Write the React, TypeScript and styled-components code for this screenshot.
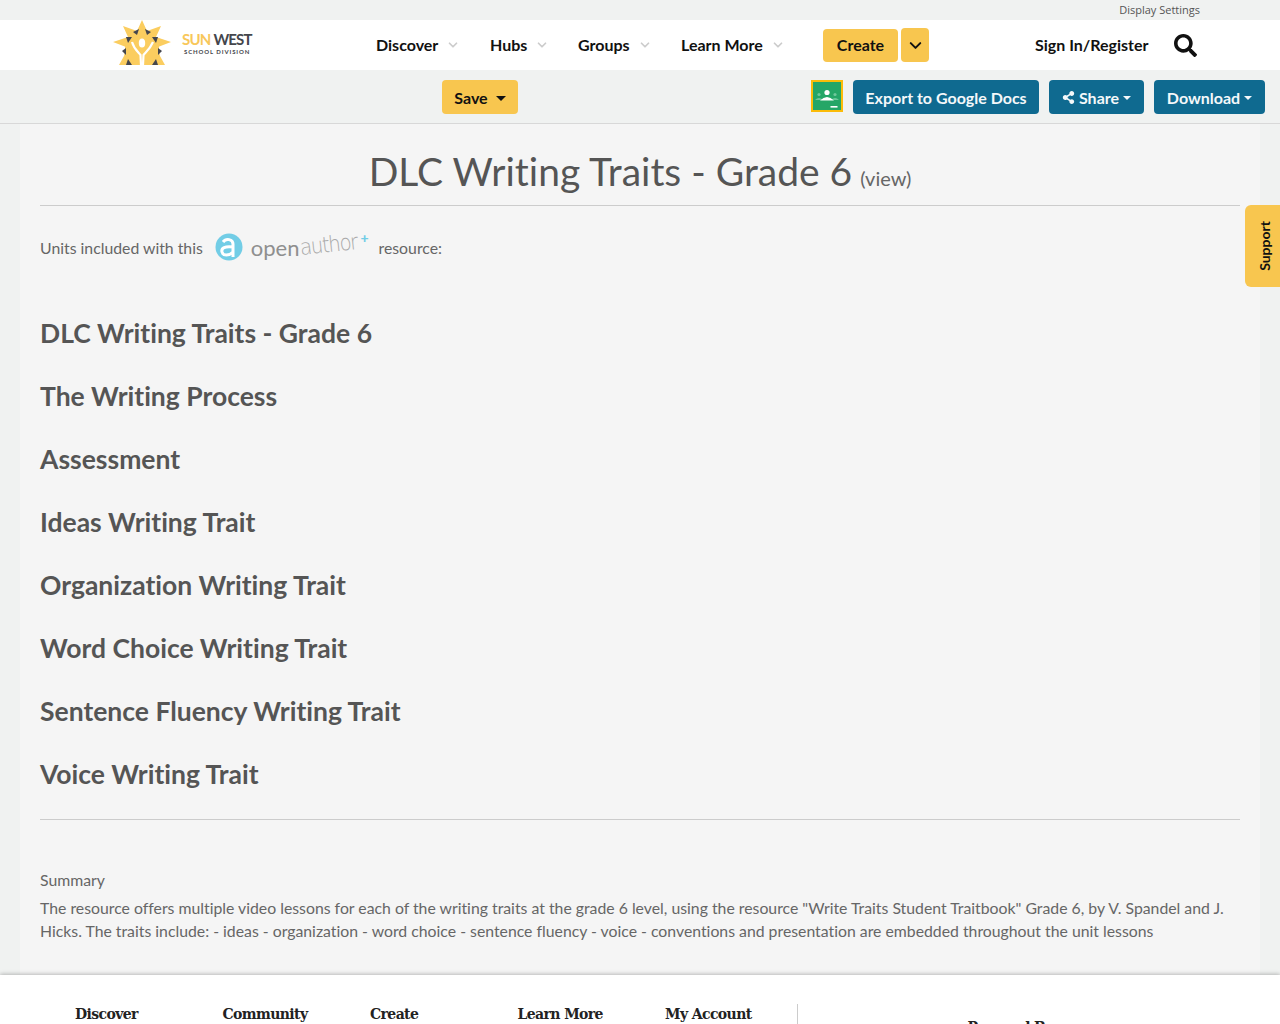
import React from "react";
import styled, { createGlobalStyle } from "styled-components";
import { FaSearch, FaShareAlt } from "react-icons/fa";
import { FiChevronDown } from "react-icons/fi";

const Global = createGlobalStyle`
  html, body { margin: 0; padding: 0; height: 1024px; overflow: hidden; background: #f0f2f1; }
  body { font-family: Lato, "Liberation Sans", sans-serif; color: #555; font-variant-ligatures: none; }
  * { box-sizing: border-box; }
  button { font-variant-ligatures: none; }
`;

const Page = styled.div`
  position: relative;
  width: 1280px;
  height: 1024px;
  overflow: hidden;
`;

const TopBar = styled.div`
  height: 20px;
  display: flex;
  justify-content: flex-end;
  align-items: center;
  padding: 0 80px 1px 0;
  font: 400 11px "Open Sans", sans-serif;
  color: #555;
`;

const Nav = styled.nav`
  height: 50px;
  background: #fff;
  display: flex;
  align-items: center;
  padding-left: 112px;
`;

const Brand = styled.div`
  display: flex;
  width: 264px;
  height: 50px;
  align-items: flex-start;
`;

const BrandText = styled.div`
  margin-left: 10px;
  padding-top: 10px;
  display: flex;
  flex-direction: column;
`;

const BrandName = styled.div`
  font-size: 15px;
  font-weight: 700;
  letter-spacing: -0.85px;
  line-height: 18px;
  color: #44464c;
  white-space: nowrap;
`;

const BrandSun = styled.span`
  color: #f8c75a;
  font-weight: 700;
  margin-right: 3px;
`;

const BrandSub = styled.div`
  font-size: 6px;
  font-weight: 700;
  letter-spacing: 0.9px;
  line-height: 8px;
  margin-left: 2px;
  color: #44464c;
  white-space: nowrap;
`;

const NavItem = styled.a<{ $w: number }>`
  width: ${(p) => p.$w}px;
  display: flex;
  align-items: center;
  font-size: 16px;
  font-weight: 700;
  color: #111;
  white-space: nowrap;
  padding-bottom: 2px;
  svg { margin-left: 8px; color: #ccc; position: relative; top: 1px; }
`;

const CreateButton = styled.button`
  height: 33px;
  width: 75px;
  margin-left: 2px;
  border: 0;
  border-radius: 4px;
  background: #f8c64f;
  font: 700 16px Lato, sans-serif;
  color: #111;
  padding: 0 0 2px;
`;

const CreateCaret = styled.button`
  height: 34px;
  width: 28px;
  margin-left: 3px;
  border: 0;
  border-radius: 4px;
  background: #f8c64f;
  color: #111;
  padding: 0;
  display: flex;
  align-items: center;
  justify-content: center;
`;

const SignIn = styled.a`
  margin-left: 106px;
  font-size: 16px;
  font-weight: 700;
  color: #111;
  white-space: nowrap;
  padding-bottom: 2px;
`;

const SearchLink = styled.a`
  margin-left: 25px;
  display: flex;
  color: #111;
`;

const Toolbar = styled.div`
  height: 54px;
  border-bottom: 1px solid #d8d8d8;
  display: flex;
  align-items: flex-start;
  padding: 10px 15px 0 442px;
`;

const SaveButton = styled.button`
  height: 34px;
  width: 76px;
  border: 0;
  border-radius: 4px;
  background: #f8c64f;
  font: 700 16px Lato, sans-serif;
  color: #111;
  padding: 0;
  display: flex;
  align-items: center;
  justify-content: center;
  gap: 8px;
`;

const Caret = styled.span<{ $size?: number }>`
  display: inline-block;
  width: 0;
  height: 0;
  margin-top: 2px;
  border-left: ${(p) => p.$size ?? 4}px solid transparent;
  border-right: ${(p) => p.$size ?? 4}px solid transparent;
  border-top: ${(p) => p.$size ?? 4}px solid currentColor;
`;

const ClassroomBox = styled.div`
  width: 32px;
  height: 32px;
  margin-left: auto;
  margin-right: 10px;
  border: 2px solid #fbbc09;
  background: #25a667;
  display: flex;
`;

const BlueButton = styled.button<{ $w: number }>`
  width: ${(p) => p.$w}px;
  height: 34px;
  margin-right: 10px;
  border: 0;
  border-radius: 4px;
  background: #0f6a90;
  color: #f4f8fa;
  font: 700 16px Lato, sans-serif;
  padding: 0;
  display: flex;
  align-items: center;
  justify-content: center;
  gap: 4px;
  white-space: nowrap;
  &:last-child { margin-right: 0; }
`;

const Main = styled.main`
  width: 1240px;
  height: 851px;
  margin-left: 20px;
  background: #f5f5f5;
  padding: 0 20px;
`;

const Title = styled.h1`
  margin: 0;
  height: 82px;
  border-bottom: 1px solid #ccc;
  text-align: center;
  font-weight: 400;
  font-size: 39px;
  line-height: 48px;
  padding-top: 23px;
  color: #555;
`;

const TitleNote = styled.small`
  font-size: 20px;
  color: #666;
  margin-left: 8px;
`;

const UnitsLine = styled.div`
  display: flex;
  align-items: center;
  height: 44px;
  margin-top: 19px;
  font-size: 15.8px;
  color: #666;
`;

const OALogo = styled.div`
  display: flex;
  align-items: center;
  margin: 0 13px 0 12px;
  position: relative;
`;

const OAText = styled.span`
  font-size: 22px;
  color: #8f8f8f;
  margin-left: 8px;
`;

const OAScript = styled.span`
  display: inline-block;
  font-family: "DejaVu Sans", sans-serif;
  font-weight: 200;
  font-size: 22px;
  color: #a9a9a9;
  transform: rotate(-6deg) scaleX(0.9);
  transform-origin: left center;
  width: 66px;
  letter-spacing: -1.5px;
`;

const OAPlus = styled.span`
  position: absolute;
  right: -3px;
  top: -4px;
  font-size: 14px;
  font-weight: 900;
  color: #72cde6;
`;

const UnitList = styled.div`
  margin-top: 46px;
  border-bottom: 1px solid #ccc;
  height: 505px;
`;

const UnitTitle = styled.h2`
  margin: 0;
  height: 63px;
  font-size: 26.5px;
  line-height: 36px;
  font-weight: 700;
  color: #555;
`;

const SummaryBlock = styled.section`
  margin-top: 48px;
  font-size: 15.8px;
  line-height: 23px;
  color: #666;
`;

const SummaryLabel = styled.div`
  margin-bottom: 5px;
`;

const Footer = styled.footer`
  height: 60px;
  background: #fff;
  box-shadow: 0 -1px 4px rgba(0, 0, 0, 0.25);
  display: flex;
  padding: 29px 0 0 75px;
  position: relative;
`;

const FooterCol = styled.div`
  width: 147.5px;
  font-family: "DejaVu Serif", serif;
  font-weight: 700;
  font-size: 14px;
  letter-spacing: -0.6px;
  line-height: 20px;
  color: #222;
  white-space: nowrap;
`;

const FooterAside = styled.div`
  border-left: 1px solid #ccc;
  margin-left: -16px;
  padding: 15px 0 0 170px;
  font-family: "DejaVu Serif", serif;
  font-weight: 700;
  font-size: 14px;
  letter-spacing: -0.6px;
  color: #222;
  white-space: nowrap;
`;

const Support = styled.a`
  position: absolute;
  right: 0;
  top: 205px;
  width: 35px;
  height: 82px;
  border-radius: 6px 0 0 6px;
  background: #f8c64f;
  display: flex;
  align-items: center;
  justify-content: center;
  font-size: 14px;
  font-weight: 700;
  color: #111;
  padding-left: 3px;
`;

const SupportLabel = styled.span`
  writing-mode: vertical-rl;
  transform: rotate(180deg);
`;

const units = [
  "DLC Writing Traits - Grade 6",
  "The Writing Process",
  "Assessment",
  "Ideas Writing Trait",
  "Organization Writing Trait",
  "Word Choice Writing Trait",
  "Sentence Fluency Writing Trait",
  "Voice Writing Trait",
];

const navItems: [string, number][] = [
  ["Discover", 114],
  ["Hubs", 88],
  ["Groups", 103],
  ["Learn More", 140],
];

const SunLogo = () => (
  <svg width="60" height="45" viewBox="0 0 60 45">
    <polygon
      fill="#fbcd5f"
      points="30,0 35,11 49,6 44,17 59,22 46,27 48,36 53,45 7,45 12,36 14,27 1,22 16,17 11,6 25,11"
    />
    <circle cx="30" cy="27" r="17" fill="#fbcd5f" />
    <g fill="#45464d">
      <polygon points="21,12 27,9 25,15" />
      <polygon points="39,12 33,9 35,15" />
      <polygon points="14,17 20,17 16,23" />
      <polygon points="46,17 40,17 44,23" />
      <polygon points="14,28 10,31 14,35" />
      <polygon points="46,28 50,31 46,35" />
      <polygon points="14,45 20,45 16,39" />
      <polygon points="46,45 40,45 44,39" />
    </g>
    <ellipse cx="30" cy="23" rx="3.2" ry="4.6" fill="#fff" />
    <path d="M20 22 C22 29 26 32 28.5 35 L29 45 M41 22 C38 29 34 32 31.5 35 L31 45" fill="none" stroke="#fff" strokeWidth="2.2" />
  </svg>
);

const OAMark = () => (
  <svg width="28" height="28" viewBox="0 0 28 28">
    <circle cx="14" cy="14" r="13.5" fill="#72cde6" />
    <path d="M8 9 C11 5 18 6 18 11 L18 24 M18 14 C10 13 6 15 7 19 C8 23 14 23 18 19" fill="none" stroke="#fff" strokeWidth="3" />
  </svg>
);

const ClassroomIcon = () => (
  <svg width="28" height="28" viewBox="0 0 28 28">
    <circle cx="6" cy="12.5" r="1.6" fill="#6fc79b" />
    <circle cx="22" cy="12.5" r="1.6" fill="#6fc79b" />
    <path d="M2 18 q4 -4 8 0 z M18 18 q4 -4 8 0 z" fill="#6fc79b" />
    <circle cx="14" cy="10.5" r="2.6" fill="#fff" />
    <path d="M7 18.5 q7 -7 14 0 z" fill="#fff" />
    <rect x="17.5" y="24" width="7" height="1.6" fill="#fff" />
  </svg>
);

export default function App() {
  return (
    <Page>
      <Global />
      <TopBar>Display Settings</TopBar>
      <Nav>
        <Brand>
          <SunLogo />
          <BrandText>
            <BrandName>
              <BrandSun>SUN</BrandSun>WEST
            </BrandName>
            <BrandSub>SCHOOL DIVISION</BrandSub>
          </BrandText>
        </Brand>
        {navItems.map(([label, w]) => (
          <NavItem key={label} $w={w}>
            {label}
            <FiChevronDown size={14} strokeWidth={3} />
          </NavItem>
        ))}
        <CreateButton>Create</CreateButton>
        <CreateCaret>
          <FiChevronDown size={19} strokeWidth={2.5} />
        </CreateCaret>
        <SignIn>Sign In/Register</SignIn>
        <SearchLink>
          <FaSearch size={23} />
        </SearchLink>
      </Nav>
      <Toolbar>
        <SaveButton>
          Save <Caret $size={5} />
        </SaveButton>
        <ClassroomBox>
          <ClassroomIcon />
        </ClassroomBox>
        <BlueButton $w={186}>Export to Google Docs</BlueButton>
        <BlueButton $w={95}>
          <FaShareAlt size={13} />
          Share <Caret />
        </BlueButton>
        <BlueButton $w={111}>
          Download <Caret />
        </BlueButton>
      </Toolbar>
      <Main>
        <Title>
          DLC Writing Traits - Grade 6<TitleNote>(view)</TitleNote>
        </Title>
        <UnitsLine>
          Units included with this
          <OALogo>
            <OAMark />
            <OAText>open</OAText>
            <OAScript>author</OAScript>
            <OAPlus>+</OAPlus>
          </OALogo>
          resource:
        </UnitsLine>
        <UnitList>
          {units.map((u) => (
            <UnitTitle key={u}>{u}</UnitTitle>
          ))}
        </UnitList>
        <SummaryBlock>
          <SummaryLabel>Summary</SummaryLabel>
          The resource offers multiple video lessons for each of the writing traits at the grade 6 level, using the resource "Write Traits Student Traitbook" Grade 6, by V. Spandel and J. Hicks. The traits include: - ideas - organization - word choice - sentence fluency - voice - conventions and presentation are embedded throughout the unit lessons
        </SummaryBlock>
      </Main>
      <Footer>
        <FooterCol>Discover</FooterCol>
        <FooterCol>Community</FooterCol>
        <FooterCol>Create</FooterCol>
        <FooterCol>Learn More</FooterCol>
        <FooterCol>My Account</FooterCol>
        <FooterAside>Powered By</FooterAside>
      </Footer>
      <Support>
        <SupportLabel>Support</SupportLabel>
      </Support>
    </Page>
  );
}
